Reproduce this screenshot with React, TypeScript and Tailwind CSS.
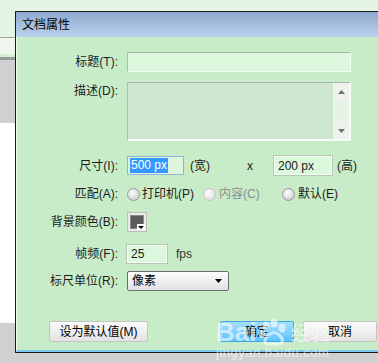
import React from "react";

const font = { fontFamily: '"Liberation Sans", "Noto Sans CJK SC", sans-serif' };

function Label({ children, top = false }: { children: React.ReactNode; top?: boolean }) {
  return (
    <div className={`w-[101px] shrink-0 text-right pr-0 text-[12px] leading-[14px] text-[#1c1c1c] ${top ? "self-start pt-[2px]" : ""}`}>
      {children}
    </div>
  );
}

function Radio({ disabled = false }: { disabled?: boolean }) {
  return (
    <div
      className={`w-[13px] h-[13px] rounded-full border shrink-0 ${
        disabled
          ? "border-[#c4c4c4] bg-[radial-gradient(circle_at_40%_35%,#ffffff,#e6e6e6_60%,#d6d6d6)]"
          : "border-[#9a9a9a] bg-[radial-gradient(circle_at_40%_35%,#ffffff,#dcdcdc_55%,#b8b8b8)]"
      }`}
    />
  );
}

function Field({ w, children, className = "" }: { w: string; children?: React.ReactNode; className?: string }) {
  return (
    <div
      className={`${w} h-full border-t border-l border-t-[#a9b3a9] border-l-[#b0bab0] border-b border-r border-b-[#f4fff4] border-r-[#f4fff4] bg-[#dcf8dc] flex items-center ${className}`}
    >
      {children}
    </div>
  );
}

export default function App() {
  return (
    <div className="relative w-[378px] h-[363px] overflow-hidden bg-[#e6f5e6]" style={font}>
      {/* background window behind */}
      <div className="flex flex-col w-full h-full">
        <div className="h-[37px] bg-[#e5f5e5]" />
        <div className="h-[1px] bg-[#a3a3a3]" />
        <div className="h-[16px] bg-[#eef6ee]" />
        <div className="h-[3px] bg-[#d6efd6]" />
        <div className="h-[3px] bg-[#9a9a9a]" />
        <div className="h-[63px] bg-[#d0d0d0]" />
        <div className="h-[200px] bg-white" />
        <div className="flex-1 bg-[#d0d0d0]" />
      </div>

      {/* dialog */}
      <div className="absolute left-[15px] top-[11px] w-[380px] h-[342px] border-l border-t border-b border-[#1a1a1a] flex flex-col">
        <div className="h-[25px] shrink-0 bg-gradient-to-b from-[#8ea9cd] to-[#bad2ec] flex items-center pl-[6px] text-[12px] text-black">
          文档属性
        </div>
        <div className="flex-1 bg-[#c8ecc8] border-l border-l-[#ecfbec] border-b-2 border-b-[#78c8f0] flex flex-col pt-[15px]">
          {/* 标题 */}
          <div className="flex items-center h-[20px]">
            <Label>标题(T):</Label>
            <div className="ml-[9px] h-full">
              <Field w="w-[224px]" />
            </div>
          </div>

          {/* 描述 */}
          <div className="flex mt-[10px] h-[59px]">
            <Label top>描述(D):</Label>
            <div className="ml-[9px] w-[224px] h-full border-t border-l border-t-[#a9b3a9] border-l-[#b0bab0] border-b-2 border-r-2 border-b-[#f4fff4] border-r-[#f4fff4] bg-[#cde6cd] flex justify-end">
              <div className="w-[16px] h-full border-l border-l-[#f0f6f0] bg-[#e6f3e6] flex flex-col">
                <div className="h-[17px] bg-[#eef1ee] flex items-center justify-center">
                  <svg width="7" height="4" viewBox="0 0 7 4">
                    <path d="M3.5 0 L7 4 L0 4 Z" fill="#707070" />
                  </svg>
                </div>
                <div className="flex-1" />
                <div className="h-[17px] bg-[#eef1ee] flex items-center justify-center">
                  <svg width="7" height="4" viewBox="0 0 7 4">
                    <path d="M0 0 L7 0 L3.5 4 Z" fill="#707070" />
                  </svg>
                </div>
              </div>
            </div>
          </div>

          {/* 尺寸 */}
          <div className="flex items-center mt-[15px] h-[19px]">
            <Label>尺寸(I):</Label>
            <div className="ml-[9px] h-full w-[57px] border border-[#8fb4dc] bg-[#dcf5dc] flex items-center pl-[2px]">
              <span className="bg-[#3399ff] text-white text-[12px] leading-[15px] px-[1px]">500 px</span>
            </div>
            <span className="ml-[6px] text-[12px] text-[#1c1c1c]">(宽)</span>
            <span className="ml-[37px] text-[12px] text-[#1c1c1c]">x</span>
            <div className="ml-[21px] h-full">
              <div className="w-[58px] h-full border border-[#f2fff2] outline outline-1 outline-[#b8c4b8] bg-[#dcf8dc] flex items-center pl-[3px] text-[12px] text-[#1c1c1c]">
                200 px
              </div>
            </div>
            <span className="ml-[5px] text-[12px] text-[#1c1c1c]">(高)</span>
          </div>

          {/* 匹配 */}
          <div className="flex items-center mt-[11px] h-[16px]">
            <Label>匹配(A):</Label>
            <div className="ml-[9px] w-[76px] flex items-center gap-[2px]">
              <Radio />
              <span className="text-[12px] text-[#1c1c1c]">打印机(P)</span>
            </div>
            <div className="w-[79px] flex items-center gap-[3px]">
              <Radio disabled />
              <span className="text-[12px] text-[#8c8c8c]">内容(C)</span>
            </div>
            <div className="flex items-center gap-[3px]">
              <Radio />
              <span className="text-[12px] text-[#1c1c1c]">默认(E)</span>
            </div>
          </div>

          {/* 背景颜色 */}
          <div className="flex items-center mt-[10px] h-[20px]">
            <Label>背景颜色(B):</Label>
            <div className="ml-[9px] w-[20px] h-[20px] border border-[#b8c0b8] bg-[#e8ece8] p-[2px] relative">
              <div className="w-full h-full bg-[#5c5c5c] border border-[#8a8a8a]" />
              <div className="absolute right-[1px] bottom-[1px] w-[8px] h-[6px] bg-white flex items-center justify-center">
                <svg width="6" height="3" viewBox="0 0 6 3">
                  <path d="M0 0 L6 0 L3 3 Z" fill="#000" />
                </svg>
              </div>
            </div>
          </div>

          {/* 帧频 */}
          <div className="flex items-center mt-[13px] h-[18px]">
            <Label>帧频(F):</Label>
            <div className="ml-[9px] h-full">
              <div className="w-[40px] h-full border border-[#f2fff2] outline outline-1 outline-[#b8c4b8] bg-[#dcf8dc] flex items-center pl-[3px] text-[12px] text-[#1c1c1c]">
                25
              </div>
            </div>
            <span className="ml-[9px] text-[12px] text-[#333]">fps</span>
          </div>

          {/* 标尺单位 */}
          <div className="flex items-center mt-[8px] h-[20px]">
            <Label>标尺单位(R):</Label>
            <div className="ml-[9px] w-[102px] h-full rounded-[2px] border border-[#6e6e6e] bg-gradient-to-b from-[#fdfdfd] to-[#e2e2e2] flex items-center justify-between pl-[4px] pr-[6px]">
              <span className="text-[12px] text-black">像素</span>
              <svg width="7" height="4" viewBox="0 0 7 4">
                <path d="M0 0 L7 0 L3.5 4 Z" fill="#000" />
              </svg>
            </div>
          </div>

          {/* buttons */}
          <div className="flex items-center mt-[30px] h-[21px]">
            <div className="ml-[32px] w-[99px] h-full rounded-[2px] border border-[#c4c4c4] bg-gradient-to-b from-[#fbfbfb] to-[#e3e3e3] flex items-center justify-center text-[12px] text-black">
              设为默认值(M)
            </div>
            <div className="ml-[72px] w-[74px] h-full rounded-[2px] border border-[#3ca7ea] bg-gradient-to-b from-[#a4e0ff] to-[#5cc2fc] flex items-center justify-center text-[12px] text-black">
              确定
            </div>
            <div className="ml-[9px] w-[74px] h-full rounded-[2px] border border-[#c4c4c4] bg-gradient-to-b from-[#fbfbfb] to-[#e3e3e3] flex items-center justify-center text-[12px] text-black">
              取消
            </div>
          </div>
        </div>
      </div>

      {/* watermark */}
      <div className="absolute left-[216px] top-[318px] pointer-events-none select-none opacity-60">
        <div className="flex items-end h-[28px]">
          <span className="text-[26px] leading-[28px] font-bold text-white" style={{ fontFamily: '"Liberation Sans", sans-serif' }}>
            Bai
          </span>
          <svg width="30" height="28" viewBox="0 0 30 28" className="ml-[2px]">
            <ellipse cx="8" cy="8" rx="3.5" ry="4.5" fill="white" />
            <ellipse cx="16" cy="5" rx="3.5" ry="4.5" fill="white" />
            <ellipse cx="24" cy="10" rx="3.5" ry="4.5" fill="white" />
            <ellipse cx="4" cy="16" rx="3" ry="4" fill="white" />
            <path d="M9 26 C6 26 6 20 11 17 C14 14 18 14 21 17 C26 21 25 26 21 26 Z" fill="none" stroke="white" strokeWidth="3" />
          </svg>
          <span className="ml-[2px] text-[20px] leading-[26px] text-white" style={{ fontFamily: '"Noto Sans CJK SC", sans-serif' }}>
            经验
          </span>
        </div>
        <div className="text-[13px] leading-[14px] text-white tracking-[0.5px]" style={{ fontFamily: '"Liberation Sans", sans-serif' }}>
          jingyan.baidu.com
        </div>
      </div>
    </div>
  );
}
